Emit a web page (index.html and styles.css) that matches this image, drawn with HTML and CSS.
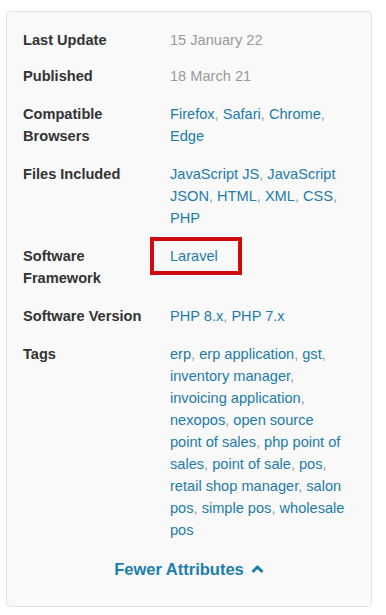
FILE: index.html
```html
<!DOCTYPE html>
<html lang="en">
<head>
    <meta charset="UTF-8">
    <meta name="viewport" content="width=device-width, initial-scale=1.0">
    <title>Item Attributes</title>
    <link rel="stylesheet" href="styles.css">
</head>
<body>
    <div class="attributes">
        <div class="attr-row">
            <div class="attr-label">Last Update</div>
            <div class="attr-value muted">15 January 22</div>
        </div>
        <div class="attr-row">
            <div class="attr-label">Published</div>
            <div class="attr-value muted">18 March 21</div>
        </div>
        <div class="attr-row">
            <div class="attr-label">Compatible Browsers</div>
            <div class="attr-value"><a href="#">Firefox</a>, <a href="#">Safari</a>, <a href="#">Chrome</a>, <a href="#">Edge</a></div>
        </div>
        <div class="attr-row">
            <div class="attr-label">Files Included</div>
            <div class="attr-value"><a href="#">JavaScript JS</a>, <a href="#">JavaScript JSON</a>, <a href="#">HTML</a>, <a href="#">XML</a>, <a href="#">CSS</a>, <a href="#">PHP</a></div>
        </div>
        <div class="attr-row">
            <div class="attr-label">Software Framework</div>
            <div class="attr-value"><span class="highlight"><a href="#">Laravel</a></span></div>
        </div>
        <div class="attr-row">
            <div class="attr-label">Software Version</div>
            <div class="attr-value"><a href="#">PHP 8.x</a>, <a href="#">PHP 7.x</a></div>
        </div>
        <div class="attr-row">
            <div class="attr-label">Tags</div>
            <div class="attr-value"><a href="#">erp</a>, <a href="#">erp application</a>, <a href="#">gst</a>, <a href="#">inventory manager</a>, <a href="#">invoicing application</a>, <a href="#">nexopos</a>, <a href="#">open source point of sales</a>, <a href="#">php point of sales</a>, <a href="#">point of sale</a>, <a href="#">pos</a>, <a href="#">retail shop manager</a>, <a href="#">salon pos</a>, <a href="#">simple pos</a>, <a href="#">wholesale pos</a></div>
        </div>

        <a href="#" class="toggle">Fewer Attributes
            <svg width="13" height="10" viewBox="0 0 13 10"><path d="M1.5 8 L6.5 3 L11.5 8" fill="none" stroke="currentColor" stroke-width="3"/></svg>
        </a>
    </div>
</body>
</html>
```

FILE: styles.css
```css
* {
    margin: 0;
    padding: 0;
    box-sizing: border-box;
}

body {
    background: #fff;
    font-family: 'Liberation Sans', Arial, sans-serif;
    font-size: 14.6px;
    line-height: 22px;
    color: #333;
    padding: 11px 14px 0 6px;
}

.attributes {
    background: #f9f9f9;
    border: 1px solid #e1e3e6;
    border-radius: 4px;
    padding: 17px 16px 26px;
}

.attr-row {
    display: flex;
    margin-bottom: 16px;
}

.attr-row:first-child {
    margin-bottom: 14px;
}

.attr-label {
    width: 147px;
    flex-shrink: 0;
    font-weight: bold;
    padding-right: 20px;
}

.attr-value {
    flex: 1;
    color: #999;
    padding-right: 6px;
}

.attr-value a {
    color: #1d7ca8;
    text-decoration: none;
}

.muted {
    color: #999;
}

.highlight {
    position: relative;
}

/* red annotation box */
.highlight::after {
    content: '';
    position: absolute;
    left: -20px;
    right: -24px;
    top: -11px;
    bottom: -11px;
    border: 4px solid #d10a10;
}

.toggle {
    display: flex;
    align-items: center;
    justify-content: center;
    gap: 7px;
    margin-top: 17px;
    font-size: 16.5px;
    font-weight: bold;
    color: #1b7fac;
    text-decoration: none;
}
```
